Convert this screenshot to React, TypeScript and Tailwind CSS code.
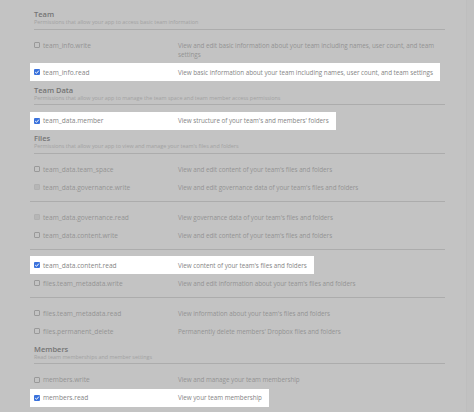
type Perm = { name: string; desc: string; checked?: boolean; disabled?: boolean };
type Section = { title: string; subtitle: string; groups: Perm[][] };

const sections: Section[] = [
  {
    title: "Team",
    subtitle: "Permissions that allow your app to access basic team information",
    groups: [
      [
        {
          name: "team_info.write",
          desc: "View and edit basic information about your team including names, user count, and team settings",
        },
        {
          name: "team_info.read",
          desc: "View basic information about your team including names, user count, and team settings",
          checked: true,
        },
      ],
    ],
  },
  {
    title: "Team Data",
    subtitle: "Permissions that allow your app to manage the team space and team member access permissions",
    groups: [
      [
        {
          name: "team_data.member",
          desc: "View structure of your team's and members' folders",
          checked: true,
        },
      ],
    ],
  },
  {
    title: "Files",
    subtitle: "Permissions that allow your app to view and manage your team's files and folders",
    groups: [
      [
        { name: "team_data.team_space", desc: "View and edit content of your team's files and folders" },
        {
          name: "team_data.governance.write",
          desc: "View and edit governance data of your team's files and folders",
          disabled: true,
        },
      ],
      [
        {
          name: "team_data.governance.read",
          desc: "View governance data of your team's files and folders",
          disabled: true,
        },
        { name: "team_data.content.write", desc: "View and edit content of your team's files and folders" },
      ],
      [
        { name: "team_data.content.read", desc: "View content of your team's files and folders", checked: true },
        { name: "files.team_metadata.write", desc: "View and edit information about your team's files and folders" },
      ],
      [
        { name: "files.team_metadata.read", desc: "View information about your team's files and folders" },
        { name: "files.permanent_delete", desc: "Permanently delete members' Dropbox files and folders" },
      ],
    ],
  },
  {
    title: "Members",
    subtitle: "Read team memberships and member settings",
    groups: [
      [
        { name: "members.write", desc: "View and manage your team membership" },
        { name: "members.read", desc: "View your team membership", checked: true },
      ],
    ],
  },
];

function Box({ checked, disabled }: { checked?: boolean; disabled?: boolean }) {
  if (checked) {
    return (
      <span className="flex h-[6px] w-[6px] shrink-0 items-center justify-center rounded-[1px] bg-[#3a72dc]">
        <svg viewBox="0 0 6 6" className="h-[6px] w-[6px]">
          <path d="M1.2 3.1 L2.5 4.3 L4.9 1.6" fill="none" stroke="#fff" strokeWidth="1" />
        </svg>
      </span>
    );
  }
  return (
    <span
      className={
        disabled
          ? "h-[6px] w-[6px] shrink-0 rounded-[1px] border border-[#b0b0b0] bg-[#b6b6b6]"
          : "h-[6px] w-[6px] shrink-0 rounded-[1px] border border-[#999]"
      }
    />
  );
}

function Row({ p }: { p: Perm }) {
  return (
    <div
      className={
        "flex w-fit py-[4.5px] pl-[4px] pr-[7px] leading-[9px] " +
        (p.checked ? "bg-white text-[#858585]" : "text-[#939393]")
      }
    >
      <div className="flex h-[9px] w-[144px] shrink-0 items-center gap-[3px] text-[6.6px]">
        <Box checked={p.checked} disabled={p.disabled} />
        <span>{p.name}</span>
      </div>
      <div className="max-w-[260px] text-[6.3px] tracking-[-0.03px]">{p.desc}</div>
    </div>
  );
}

export default function App() {
  return (
    <div
      className="flex h-[412px] w-[474px] overflow-hidden bg-[#c3c3c3]"
      style={{ fontFamily: '"Open Sans", "Liberation Sans", sans-serif' }}
    >
      <div className="w-[466px] pl-[30px] pt-[10px]">
        {sections.map((s) => (
          <div key={s.title} className="pt-[4.5px] first:pt-0">
            <div className="ml-[4px] w-[411px] border-b border-[#acacac] pb-[2px]">
              <div className="text-[7.5px] font-semibold leading-[9px] text-[#747474]">{s.title}</div>
              <div className="text-[5.4px] leading-[7.5px] text-[#a2a2a2]">{s.subtitle}</div>
            </div>
            {s.groups.map((g, i) => (
              <div
                key={i}
                className={
                  "pt-[6.5px] " +
                  (i < s.groups.length - 1 ? "pb-[4.5px] " : "") +
                  (i < s.groups.length - 1 ? "mr-[21px] border-b border-[#acacac]" : "")
                }
              >
                {g.map((p) => (
                  <Row key={p.name} p={p} />
                ))}
              </div>
            ))}
          </div>
        ))}
      </div>
      <div className="flex-1 border-l border-[#bebebe] bg-[#c1c1c1]" />
    </div>
  );
}
